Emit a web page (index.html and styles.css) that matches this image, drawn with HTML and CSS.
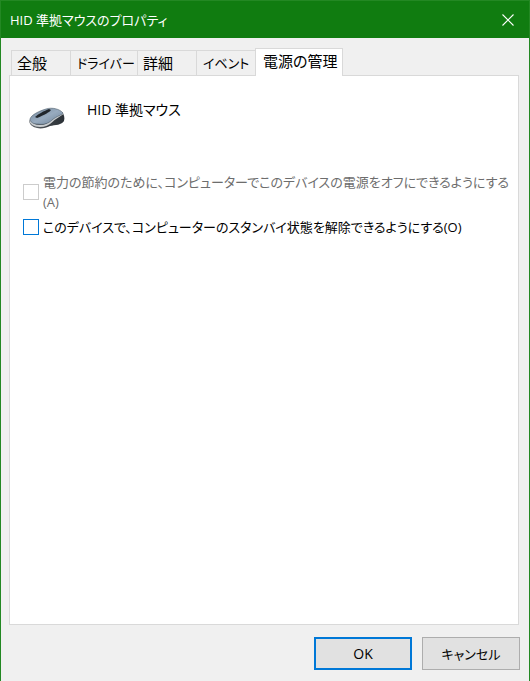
FILE: index.html
```
<!DOCTYPE html>
<html lang="ja">
<head>
    <meta charset="UTF-8">
    <meta name="viewport" content="width=device-width, initial-scale=1.0">
    <title>HID 準拠マウスのプロパティ</title>
    <link rel="stylesheet" href="styles.css">
</head>
<body>

<div class="dialog">
    <!-- Title Bar -->
    <header class="title-bar">
        <h1>HID 準拠マウスのプロパティ</h1>
        <button class="close" aria-label="閉じる">
            <svg width="12" height="12" viewBox="0 0 12 12">
                <path d="M0.5 0.5 L11.5 11.5 M11.5 0.5 L0.5 11.5" stroke="#fff" stroke-width="1.1" fill="none"/>
            </svg>
        </button>
    </header>

    <main class="content">
        <!-- Tabs -->
        <div class="tabs" role="tablist">
            <button class="tab" role="tab">全般</button>
            <button class="tab wide kana" role="tab">ドライバー</button>
            <button class="tab" role="tab">詳細</button>
            <button class="tab kana" role="tab">イベント</button>
            <button class="tab active" role="tab" aria-selected="true">電源の管理</button>
        </div>

        <div class="panel" role="tabpanel">
            <div class="device">
                <svg class="device-icon" width="36" height="26" viewBox="0 0 36 26">
                    <defs>
                        <linearGradient id="top" x1="0" y1="0" x2="1" y2="1">
                            <stop offset="0" stop-color="#72869a"/>
                            <stop offset="0.5" stop-color="#98abbf"/>
                            <stop offset="1" stop-color="#6d8298"/>
                        </linearGradient>
                        <linearGradient id="side" x1="0" y1="0" x2="1" y2="0">
                            <stop offset="0" stop-color="#6a6f74"/>
                            <stop offset="0.5" stop-color="#3c4146"/>
                            <stop offset="1" stop-color="#2b3137"/>
                        </linearGradient>
                    </defs>
                    <path d="M0 14 C0 18 3 21 8 22 C12 23 17 22 21 20 C26 19 33 19 35 15 C36 12 35 8 33 6 Z" fill="url(#side)"/>
                    <path d="M1 14 C2 18 6 20 11 20 C16 20 20 18 23 15 C27 11 31 10 34 7" fill="none" stroke="#c9cdd0" stroke-width="2"/>
                    <path d="M1 13 C2 9 10 5 17 3 C23 1 31 3 34 7 C33 9 28 10 23 14 C19 18 14 19 9 18 C4 18 1 16 1 13 Z" fill="url(#top)" stroke="#53616e" stroke-width="0.6"/>
                    <path d="M6 11 C9 8 15 5 20 3 L22 4 C21 6 15 9 8 12 Z" fill="#20262c"/>
                </svg>
                <span class="device-name">HID 準拠マウス</span>
            </div>

            <!-- Power Options -->
            <div class="options">
                <div class="option disabled">
                    <input type="checkbox" id="allowOff" disabled>
                    <label for="allowOff">電力の節約のために、コンピューターでこのデバイスの電源をオフにできるようにする (A)</label>
                </div>
                <div class="option">
                    <input type="checkbox" id="allowWake">
                    <label for="allowWake">このデバイスで、コンピューターのスタンバイ状態を解除できるようにする(O)</label>
                </div>
            </div>
        </div>

        <!-- Dialog Buttons -->
        <footer class="buttons">
            <button class="default">OK</button>
            <button class="kana">キャンセル</button>
        </footer>
    </main>
</div>

</body>
</html>
```
FILE: styles.css
```
* {
    box-sizing: border-box;
}

body {
    margin: 0;
    font-family: "Open Sans", "Noto Sans CJK JP", sans-serif;
    font-size: 13px;
    font-weight: 400;
    font-feature-settings: "palt";
    line-height: 20px;
    color: #000;
}

button {
    font: inherit;
    font-feature-settings: inherit;
    color: inherit;
    margin: 0;
}

.dialog {
    display: flex;
    flex-direction: column;
    min-height: 100vh;
    background-color: #f0f0f0;
    border: 1px solid #238823;
    border-bottom: none;
}

.title-bar {
    display: flex;
    justify-content: space-between;
    align-items: center;
    height: 37px;
    padding-left: 9px;
    background-color: #107c10;
    color: #fff;
}

.title-bar h1 {
    margin: 0;
    font-size: 13px;
    font-weight: 400;
}

.close {
    display: flex;
    justify-content: center;
    align-items: center;
    width: 42px;
    height: 36px;
    padding: 0;
    background: none;
    border: none;
}

.content {
    display: flex;
    flex-direction: column;
    flex-grow: 1;
    padding: 10px 9px 11px 8px;
}

.tabs {
    display: flex;
    align-items: flex-end;
    padding-left: 2px;
}

.tab {
    width: 60px;
    height: 25px;
    margin-right: -1px;
    padding: 0 5px;
    background-color: #f0f0f0;
    border: 1px solid #d9d9d9;
    border-bottom: none;
    font-size: 15px;
    text-align: left;
    white-space: nowrap;
}

.tab.wide {
    width: 68px;
}

.tab.active {
    position: relative;
    width: 88px;
    height: 28px;
    margin-bottom: -1px;
    padding: 0 7px 3px;
    background-color: #fff;
}

.tab.kana {
    padding: 0 6px;
    font-size: 13px;
}

.panel {
    flex-grow: 1;
    margin-right: 1px;
    padding: 24px 4px 24px 13px;
    background-color: #fff;
    border: 1px solid #d9d9d9;
}

.device {
    display: flex;
    align-items: flex-start;
    gap: 22px;
    margin-bottom: 40px;
    padding-left: 6px;
}

.device-icon {
    margin-top: 6px;
}

.device-name {
    font-size: 14px;
}

.options {
    display: flex;
    flex-direction: column;
    gap: 5px;
}

.option {
    display: flex;
    align-items: center;
    gap: 4px;
}

.option input {
    appearance: none;
    flex-shrink: 0;
    width: 16px;
    height: 16px;
    margin: 0;
    background-color: #fff;
    border: 1px solid #0078d7;
}

.option.disabled {
    color: #6d6d6d;
}

.option.disabled input {
    border-color: #ccc;
}

.buttons {
    display: flex;
    justify-content: flex-end;
    gap: 10px;
    margin-top: 12px;
}

.buttons button {
    width: 98px;
    height: 33px;
    padding: 0;
    background-color: #e1e1e1;
    border: 1px solid #adadad;
    font-size: 14px;
}

.buttons .default {
    border: 2px solid #0078d7;
}

.buttons .kana {
    font-size: 13px;
}
```
